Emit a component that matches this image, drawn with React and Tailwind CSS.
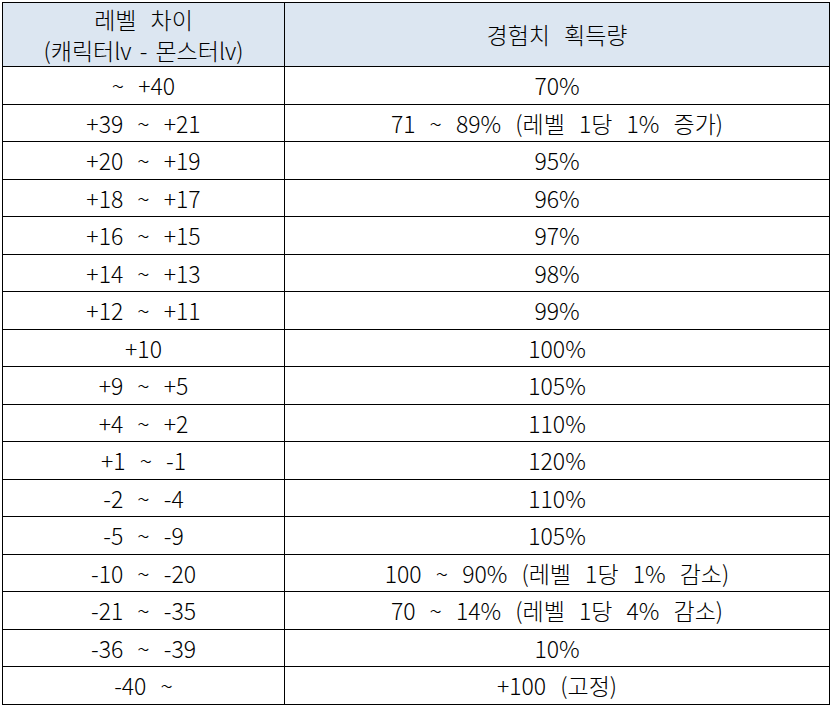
const ROWS = [
  ['~ +40', '70%'],
  ['+39 ~ +21', '71 ~ 89% (레벨 1당 1% 증가)'],
  ['+20 ~ +19', '95%'],
  ['+18 ~ +17', '96%'],
  ['+16 ~ +15', '97%'],
  ['+14 ~ +13', '98%'],
  ['+12 ~ +11', '99%'],
  ['+10', '100%'],
  ['+9 ~ +5', '105%'],
  ['+4 ~ +2', '110%'],
  ['+1 ~ -1', '120%'],
  ['-2 ~ -4', '110%'],
  ['-5 ~ -9', '105%'],
  ['-10 ~ -20', '100 ~ 90% (레벨 1당 1% 감소)'],
  ['-21 ~ -35', '70 ~ 14% (레벨 1당 4% 감소)'],
  ['-36 ~ -39', '10%'],
  ['-40 ~', '+100 (고정)'],
];

function Cell({ children, className = '' }) {
  return (
    <div className={`flex items-center justify-center border-r border-b border-black ${className}`}>
      {children}
    </div>
  );
}

export default function App() {
  return (
    <div className="w-[833px] h-[707px] bg-white pt-[2px] pl-[2px]">
      <div
        className="grid grid-cols-[282px_545px] w-[828px] border-l border-t border-black text-black text-[23px] font-light leading-[31px] [word-spacing:9px]"
        style={{ fontFamily: '"Noto Sans CJK KR", "Noto Sans", sans-serif' }}
      >
        <Cell className="h-[64px] bg-[#dce6f1] flex-col pt-[1px]">
          <span>레벨 차이</span>
          <span className="[word-spacing:3px]">(캐릭터lv - 몬스터lv)</span>
        </Cell>
        <Cell className="h-[64px] bg-[#dce6f1]">경험치 획득량</Cell>
        {ROWS.map(([diff, exp], i) => {
          const h = i % 2 === 0 ? 'h-[38px]' : 'h-[37px]';
          return [
            <Cell key={`a${i}`} className={h}>{diff}</Cell>,
            <Cell key={`b${i}`} className={h}>{exp}</Cell>,
          ];
        })}
      </div>
    </div>
  );
}
